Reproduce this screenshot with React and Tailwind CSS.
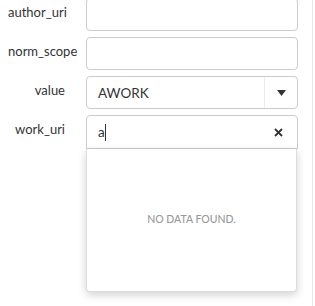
import React from 'react';

const Field = ({ label, children }) => (
    <div className="flex items-start">
        <label className="w-[57px] ml-[8px] mr-[21px] shrink-0 pt-[5px] text-right text-[13px] leading-[18px] text-[#333] whitespace-nowrap">
            {label}
        </label>
        {children}
    </div>
);

const App = () => {
    return (
        <div className="w-[313px] h-[306px] border-r border-[#e8e8e8] bg-white overflow-hidden" style={{ fontFamily: 'Lato, "Open Sans", sans-serif' }}>
            <div className="-mt-[2px] flex flex-col gap-[6px]">
                <Field label="author_uri">
                    <div className="w-[212px] h-[33px] rounded-[4px] border border-[#cccccc] bg-white" />
                </Field>
                <Field label="norm_scope">
                    <div className="w-[212px] h-[33px] rounded-[4px] border border-[#cccccc] bg-white" />
                </Field>
                <Field label="value">
                    <div className="w-[212px] h-[33px] rounded-[4px] border border-[#cccccc] bg-white flex">
                        <div className="flex-1 flex items-center pl-[11px] pt-[2px] text-[13.5px] text-[#333]">AWORK</div>
                        <div className="w-[33px] border-l border-[#ececec] flex items-center justify-center">
                            <svg width="9" height="6" viewBox="0 0 9 6" className="text-[#333]">
                                <path d="M0 0 H9 L4.5 6 Z" fill="currentColor" />
                            </svg>
                        </div>
                    </div>
                </Field>
                <Field label="work_uri">
                    <div className="relative w-[212px]">
                        <div className="h-[34px] rounded-t-[4px] border border-[#cccccc] bg-white flex items-center">
                            <div className="flex-1 flex items-center pl-[11px] text-[13.5px] text-[#333]">
                                a<span className="inline-block w-px h-[17px] bg-[#333]" />
                            </div>
                            <div className="w-[33px] flex items-center justify-center mr-[2px]">
                                <svg width="9" height="9" viewBox="0 0 9 9">
                                    <path d="M1 1 L8 8 M8 1 L1 8" stroke="#333" strokeWidth="1.8" />
                                </svg>
                            </div>
                        </div>
                        <div className="absolute left-0 top-full w-[211px] h-[143px] bg-white rounded-b-[4px] border-x border-b border-[#dddddd] shadow-[0_3px_8px_rgba(0,0,0,0.18)] flex items-center justify-center">
                            <span className="text-[10.5px] font-medium text-[#999999] uppercase">No data found.</span>
                        </div>
                    </div>
                </Field>
            </div>
        </div>
    );
};

export default App;
